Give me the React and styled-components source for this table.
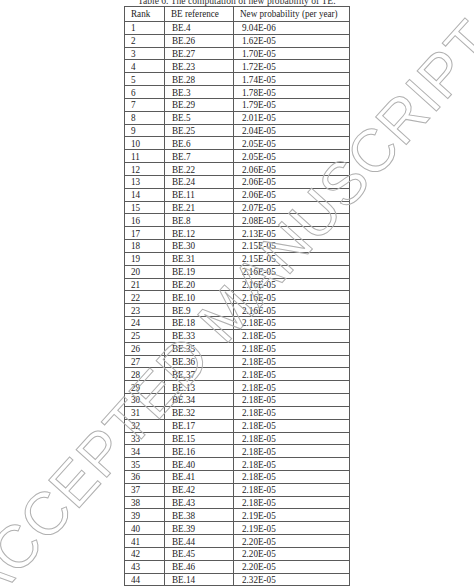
import React from 'react';
import styled, { createGlobalStyle } from 'styled-components';

const GlobalStyle = createGlobalStyle`
  html, body {
    margin: 0;
    padding: 0;
    background: #fff;
    overflow: hidden;
  }
  body {
    font-family: "Liberation Serif", "Times New Roman", serif;
    color: #1c1c1c;
  }
`;

const Page = styled.div`
  position: relative;
  width: 474px;
  height: 588px;
  overflow: hidden;
`;

const Caption = styled.div`
  margin-top: -6px;
  height: 12px;
  font-size: 11px;
  line-height: 12px;
  text-align: center;
  color: #333;
`;

const Table = styled.table`
  margin: 0 auto;
  width: 225px;
  border-collapse: collapse;
  table-layout: fixed;
  font-size: 10.5px;
`;

const HeadCell = styled.th`
  height: 14px;
  padding: 0 0 0 6px;
  border: 1px solid #5a5a5a;
  font-weight: normal;
  text-align: left;
  line-height: 12px;
  white-space: nowrap;
`;

const Cell = styled.td`
  height: 11.83px;
  padding: 0 0 0 ${(p) => p.$pad || 6}px;
  border: 1px solid #5a5a5a;
  line-height: 11px;
  white-space: nowrap;
`;

// the scanned table text is narrower than plain Times
const Text = styled.span`
  display: inline-block;
  transform: scaleX(0.87);
  transform-origin: ${(p) => p.$origin || 'left'} center;
`;

const Watermark = styled.div`
  position: absolute;
  left: ${(p) => p.$x}px;
  top: ${(p) => p.$y}px;
  transform: translate(-50%, -50%) rotate(-48deg);
  font-family: "Liberation Sans", Arial, sans-serif;
  font-size: 60px;
  letter-spacing: 1px;
  white-space: nowrap;
  color: transparent;
  -webkit-text-stroke: 1px #b0b0b0;
  pointer-events: none;
`;

const rows = [
  ['BE.4', '9.04E-06'], ['BE.26', '1.62E-05'], ['BE.27', '1.70E-05'],
  ['BE.23', '1.72E-05'], ['BE.28', '1.74E-05'], ['BE.3', '1.78E-05'],
  ['BE.29', '1.79E-05'], ['BE.5', '2.01E-05'], ['BE.25', '2.04E-05'],
  ['BE.6', '2.05E-05'], ['BE.7', '2.05E-05'], ['BE.22', '2.06E-05'],
  ['BE.24', '2.06E-05'], ['BE.11', '2.06E-05'], ['BE.21', '2.07E-05'],
  ['BE.8', '2.08E-05'], ['BE.12', '2.13E-05'], ['BE.30', '2.15E-05'],
  ['BE.31', '2.15E-05'], ['BE.19', '2.16E-05'], ['BE.20', '2.16E-05'],
  ['BE.10', '2.16E-05'], ['BE.9', '2.16E-05'], ['BE.18', '2.18E-05'],
  ['BE.33', '2.18E-05'], ['BE.35', '2.18E-05'], ['BE.36', '2.18E-05'],
  ['BE.37', '2.18E-05'], ['BE.13', '2.18E-05'], ['BE.34', '2.18E-05'],
  ['BE.32', '2.18E-05'], ['BE.17', '2.18E-05'], ['BE.15', '2.18E-05'],
  ['BE.16', '2.18E-05'], ['BE.40', '2.18E-05'], ['BE.41', '2.18E-05'],
  ['BE.42', '2.18E-05'], ['BE.43', '2.18E-05'], ['BE.38', '2.19E-05'],
  ['BE.39', '2.19E-05'], ['BE.44', '2.20E-05'], ['BE.45', '2.20E-05'],
  ['BE.46', '2.20E-05'], ['BE.14', '2.32E-05'],
];

export default function App() {
  return (
    <Page>
      <GlobalStyle />
      <Caption>
        <Text $origin="center">Table 6. The computation of new probability of TE.</Text>
      </Caption>
      <Table>
        <colgroup>
          <col style={{ width: 40 }} />
          <col style={{ width: 69 }} />
          <col style={{ width: 116 }} />
        </colgroup>
        <thead>
          <tr>
            <HeadCell><Text>Rank</Text></HeadCell>
            <HeadCell><Text>BE reference</Text></HeadCell>
            <HeadCell><Text>New probability (per year)</Text></HeadCell>
          </tr>
        </thead>
        <tbody>
          {rows.map(([ref, prob], i) => (
            <tr key={ref}>
              <Cell><Text>{i + 1}</Text></Cell>
              <Cell $pad={7}><Text>{ref}</Text></Cell>
              <Cell $pad={8}><Text>{prob}</Text></Cell>
            </tr>
          ))}
        </tbody>
      </Table>
      <Watermark $x={228} $y={312}>ACCEPTED MANUSCRIPT</Watermark>
    </Page>
  );
}
